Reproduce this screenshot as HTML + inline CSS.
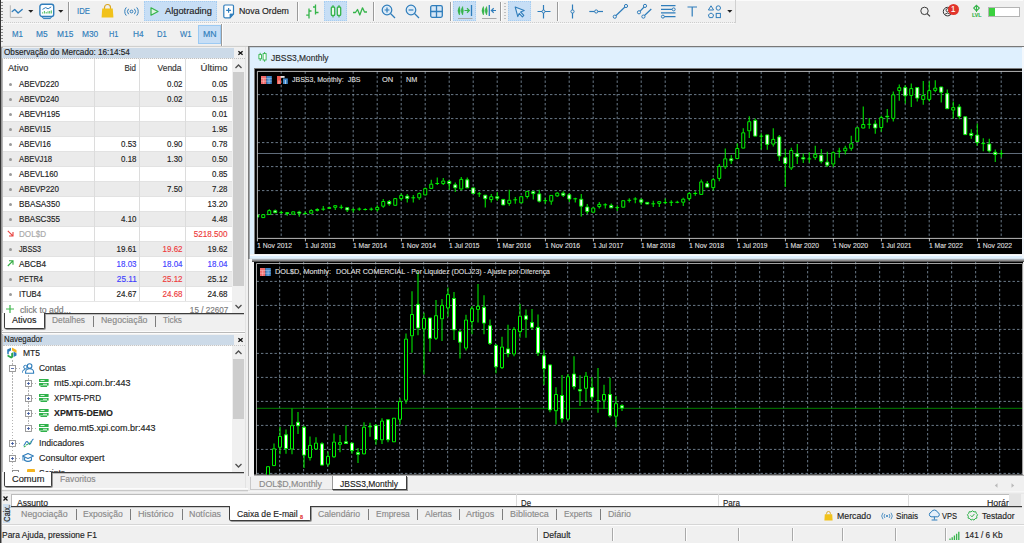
<!DOCTYPE html>
<html><head><meta charset="utf-8"><title>MetaTrader 5</title>
<style>
html,body{margin:0;padding:0}
body{width:1024px;height:543px;overflow:hidden;background:#f0f0f0;font-family:"Liberation Sans",sans-serif;position:relative}
#app{position:absolute;left:0;top:0;width:1024px;height:543px;overflow:hidden}
#app div,#app span.t,#app svg{position:absolute}
span.t{white-space:pre;display:block;-webkit-text-stroke:.15px}
svg{overflow:visible}
</style></head><body><div id="app">
<div style="left:0px;top:0px;width:1px;height:543px;background:#353535;"></div>
<div style="left:1px;top:47px;width:1px;height:496px;background:#9a9a9a;"></div>
<div style="left:2px;top:47px;width:1px;height:443px;background:#b8b8b8;"></div>
<div style="left:1px;top:0px;width:1022px;height:1px;background:#fbfbfb;"></div>
<div style="left:2px;top:22px;width:733px;height:1px;background:transparent;border-top:1px dotted #cdcdcd;height:0"></div>
<div style="left:2px;top:23px;width:733px;height:1px;background:#fbfbfb;opacity:.7"></div>
<div style="left:735px;top:0px;width:1px;height:23px;background:#d0d0d0;"></div>
<div style="left:1px;top:2px;width:2px;height:20px;background:transparent;background:repeating-linear-gradient(to bottom,#8e8e8e 0,#8e8e8e 1px,transparent 1px,transparent 3px)"></div>
<div style="left:1px;top:26px;width:2px;height:18px;background:transparent;background:repeating-linear-gradient(to bottom,#8e8e8e 0,#8e8e8e 1px,transparent 1px,transparent 3px)"></div>
<div style="left:504px;top:3px;width:2px;height:18px;background:transparent;background:repeating-linear-gradient(to bottom,#c0c0c0 0,#c0c0c0 1px,transparent 1px,transparent 3px)"></div>
<div style="left:1px;top:45px;width:247px;height:1px;background:#ececec;"></div>
<div style="left:1px;top:46px;width:247px;height:1px;background:#d0d0ce;"></div>
<div style="left:248px;top:46px;width:776px;height:1px;background:#787878;"></div>
<div style="left:248px;top:47px;width:776px;height:1px;background:#c6d4e0;"></div>
<div style="left:248px;top:46px;width:1px;height:430px;background:#7a7a7a;"></div>
<div style="left:249px;top:47px;width:1px;height:429px;background:#a0a4a8;"></div>
<svg style="left:9px;top:5px" width="14" height="13" viewBox="0 0 14 13" ><path d="M1.3 0.3V12.4H13.2" fill="none" stroke="#b4b4b4" stroke-width="1"/><path d="M3.2 6.6L5.7 4.5L9.1 8L13.2 4.4" fill="none" stroke="#2f7dbb" stroke-width="1.3" stroke-linejoin="round" stroke-linecap="round"/></svg>
<svg style="left:27.5px;top:10.4px" width="6" height="4" viewBox="0 0 6 4" ><path d="M0.2 0H5.4L2.8 2.8Z" fill="#222"/></svg>
<svg style="left:39px;top:3px" width="16" height="16" viewBox="0 0 16 16" ><path d="M3.2 13.6L4.4 15.6H11.4L12.6 13.6Z" fill="#cfe3f5" stroke="#2f7dbb" stroke-width="1"/><rect x="0.9" y="1.3" width="13.8" height="12.2" rx="2.2" fill="#fbfdff" stroke="#2f7dbb" stroke-width="1.4"/><path d="M3.5 6.4L6.6 4.6L9.1 5.8L12.2 3.9" fill="none" stroke="#2f7dbb" stroke-width="1" stroke-linejoin="round"/><path d="M3.6 10.5V9.3M5.4 10.5V8M7.2 10.5V9M9 10.5V8.3M10.7 10.5V8M12.3 10.5V7.4" stroke="#35b44a" stroke-width=".9"/></svg>
<svg style="left:58px;top:10.4px" width="6" height="4" viewBox="0 0 6 4" ><path d="M0.2 0H5.4L2.8 2.8Z" fill="#222"/></svg>
<div style="left:68px;top:2px;width:1px;height:19px;background:#9a9a9a;"></div>
<div style="left:69px;top:2px;width:1px;height:19px;background:#fdfdfd;"></div>
<span class="t" style="top:7.21px;font-size:9.2px;line-height:9.2px;color:#2f7dbb;left:77.00px;transform-origin:0 50%;transform:scaleX(0.8476);">IDE</span>
<svg style="left:101px;top:4px" width="13" height="14" viewBox="0 0 13 14" ><path d="M3.5 5V3.5A3 3 0 0 1 9.5 3.5V5" fill="none" stroke="#d9a520" stroke-width="1.2"/><path d="M1.2 4.6H11.8L12.4 13.5H0.6Z" fill="#f1c21b"/></svg>
<svg style="left:124px;top:7px" width="15" height="9" viewBox="0 0 15 9" ><circle cx="7.5" cy="4.5" r="1.4" fill="none" stroke="#2f7dbb" stroke-width="1"/><path d="M4.6 1.8A4 4 0 0 0 4.6 7.2M10.4 1.8A4 4 0 0 1 10.4 7.2M2.3 0.4A6.2 6.2 0 0 0 2.3 8.6M12.7 0.4A6.2 6.2 0 0 1 12.7 8.6" fill="none" stroke="#2f7dbb" stroke-width="1"/></svg>
<div style="left:144px;top:1px;width:73px;height:20px;background:#c7def5;border:1px dotted #a6cdf1;box-sizing:border-box"></div>
<svg style="left:150px;top:7px" width="9" height="9" viewBox="0 0 9 9" ><path d="M1 0.8L8 4.5L1 8.2Z" fill="#dff3e2" stroke="#35b44a" stroke-width="1.2" stroke-linejoin="round"/></svg>
<span class="t" style="top:7.21px;font-size:9.2px;line-height:9.2px;color:#222;left:164.50px;transform-origin:0 50%;transform:scaleX(1.0098);">Algotrading</span>
<svg style="left:223px;top:4px" width="11" height="15" viewBox="0 0 11 15" ><path d="M2 1H9.5A1 1 0 0 1 10.5 2V10L7 13.8H2A1.2 1.2 0 0 1 0.8 12.6V2.2A1.2 1.2 0 0 1 2 1Z" fill="#fff" stroke="#2f7dbb" stroke-width="1.2"/><path d="M10.5 10H7V13.8" fill="#2f7dbb" stroke="#2f7dbb" stroke-width=".8"/><path d="M3.2 6.3H8M5.6 3.9V8.7" stroke="#2f7dbb" stroke-width="1.2"/></svg>
<span class="t" style="top:7.21px;font-size:9.2px;line-height:9.2px;color:#222;left:239.00px;transform-origin:0 50%;transform:scaleX(0.9588);">Nova Ordem</span>
<div style="left:297px;top:2px;width:1px;height:19px;background:#9a9a9a;"></div>
<div style="left:298px;top:2px;width:1px;height:19px;background:#fdfdfd;"></div>
<svg style="left:305px;top:4px" width="14" height="15" viewBox="0 0 14 15" ><path d="M4 4.5V14.5M1.2 11.2H4M4 7H6.5M10.5 0.5V10.5M8 3H10.5M10.5 8.5H13.5" fill="none" stroke="#35b44a" stroke-width="1.3"/></svg>
<div style="left:324px;top:1px;width:23px;height:20px;background:#c7def5;border:1px dotted #a6cdf1;box-sizing:border-box"></div>
<svg style="left:330px;top:5px" width="12" height="13" viewBox="0 0 12 13" ><path d="M3 0V12.5M9 0V12.5" stroke="#35b44a" stroke-width="1"/><rect x="1.3" y="2" width="3.4" height="8.5" rx="1" fill="#e9f7eb" stroke="#35b44a" stroke-width="1.3"/><rect x="7.3" y="2" width="3.4" height="8.5" rx="1" fill="#e9f7eb" stroke="#35b44a" stroke-width="1.3"/></svg>
<svg style="left:353px;top:7px" width="15" height="9" viewBox="0 0 15 9" ><path d="M0 5.5H2.5L4.5 2.5L6.8 8L9.5 0.8L11.5 5L14 5" fill="none" stroke="#35b44a" stroke-width="1.3" stroke-linejoin="round"/></svg>
<div style="left:373px;top:2px;width:1px;height:19px;background:#9a9a9a;"></div>
<div style="left:374px;top:2px;width:1px;height:19px;background:#fdfdfd;"></div>
<svg style="left:381px;top:4px" width="15" height="15" viewBox="0 0 15 15" ><circle cx="6" cy="6" r="4.8" fill="#dcebf8" stroke="#2f7dbb" stroke-width="1.2"/><path d="M9.5 9.5L14 14" stroke="#2f7dbb" stroke-width="1.3"/><path d="M3.6 6H8.4M6 3.6V8.4" stroke="#2f7dbb" stroke-width="1.2"/></svg>
<svg style="left:405px;top:4px" width="15" height="15" viewBox="0 0 15 15" ><circle cx="6" cy="6" r="4.8" fill="#dcebf8" stroke="#2f7dbb" stroke-width="1.2"/><path d="M9.5 9.5L14 14" stroke="#2f7dbb" stroke-width="1.3"/><path d="M3.6 6H8.4" stroke="#2f7dbb" stroke-width="1.2"/></svg>
<svg style="left:430px;top:5px" width="13" height="13" viewBox="0 0 13 13" ><rect x=".7" y=".7" width="11.6" height="11.6" rx="1.5" fill="#d6e7f6" stroke="#2f7dbb" stroke-width="1.3"/><path d="M6.5 .7V12.3M.7 6.5H12.3" stroke="#2f7dbb" stroke-width="1.3"/></svg>
<div style="left:450px;top:2px;width:1px;height:19px;background:#9a9a9a;"></div>
<div style="left:451px;top:2px;width:1px;height:19px;background:#fdfdfd;"></div>
<div style="left:453px;top:1px;width:23px;height:20px;background:#c7def5;border:1px dotted #a6cdf1;box-sizing:border-box"></div>
<svg style="left:457px;top:4px" width="16" height="16" viewBox="0 0 16 16" ><path d="M2.4 2.6Q-0.4 6.8 2.4 11Q3.8 6.8 2.4 2.6ZM5.6 2.6Q2.8 6.8 5.6 11Q7 6.8 5.6 2.6Z" fill="#35b44a" stroke="#35b44a" stroke-width=".6"/><path d="M7.5 6.5H12M10 4.3L12.3 6.5L10 8.7" fill="none" stroke="#35b44a" stroke-width="1.2"/><path d="M14.5 1V12" stroke="#2f7dbb" stroke-width="1.3"/><path d="M1 14.5H15.5" stroke="#a8a8a8" stroke-width="1"/></svg>
<svg style="left:481px;top:4px" width="16" height="16" viewBox="0 0 16 16" ><path d="M2.4 2.6Q-0.4 6.8 2.4 11Q3.8 6.8 2.4 2.6ZM5.6 2.6Q2.8 6.8 5.6 11Q7 6.8 5.6 2.6Z" fill="#35b44a" stroke="#35b44a" stroke-width=".6"/><path d="M8.3 1V12" stroke="#2f7dbb" stroke-width="1.3"/><path d="M10.5 6.5H15M12.7 4.3L10.4 6.5L12.7 8.7" fill="none" stroke="#2f7dbb" stroke-width="1.2"/><path d="M1 14.5H15.5" stroke="#a8a8a8" stroke-width="1"/></svg>
<div style="left:500px;top:2px;width:1px;height:19px;background:#9a9a9a;"></div>
<div style="left:501px;top:2px;width:1px;height:19px;background:#fdfdfd;"></div>
<div style="left:508px;top:1px;width:23px;height:20px;background:#c7def5;border:1px dotted #a6cdf1;box-sizing:border-box"></div>
<svg style="left:514px;top:6px" width="12" height="12" viewBox="0 0 12 12" ><path d="M1.2 1L10.2 4.6L6.6 6L9.8 9.4L8.4 10.8L5.2 7.4L3.8 10.6Z" fill="#dcebf8" stroke="#2f7dbb" stroke-width="1.1" stroke-linejoin="round"/></svg>
<svg style="left:537px;top:5px" width="14" height="14" viewBox="0 0 14 14" ><path d="M0.5 6.5H13.5M6.5 0V13.5" stroke="#2f7dbb" stroke-width="1.2"/><circle cx="6.5" cy="6.5" r="1.5" fill="#f0f0f0" stroke="#2f7dbb" stroke-width="1"/></svg>
<div style="left:557px;top:2px;width:1px;height:19px;background:#9a9a9a;"></div>
<div style="left:558px;top:2px;width:1px;height:19px;background:#fdfdfd;"></div>
<svg style="left:568px;top:4px" width="9" height="15" viewBox="0 0 9 15" ><path d="M4.5 0.5V14.5" stroke="#2f7dbb" stroke-width="1.2"/><circle cx="4.5" cy="7.5" r="1.6" fill="#f0f0f0" stroke="#2f7dbb" stroke-width="1"/></svg>
<svg style="left:589px;top:7px" width="15" height="9" viewBox="0 0 15 9" ><path d="M0.3 4.5H14" stroke="#2f7dbb" stroke-width="1.2"/><circle cx="7.2" cy="4.5" r="1.6" fill="#f0f0f0" stroke="#2f7dbb" stroke-width="1"/></svg>
<svg style="left:612px;top:4px" width="16" height="15" viewBox="0 0 16 15" ><path d="M3.3 12.3L13.7 2.3" stroke="#2f7dbb" stroke-width="1.2"/><circle cx="2.8" cy="12.7" r="1.6" fill="#f0f0f0" stroke="#2f7dbb" stroke-width="1"/><circle cx="14" cy="2" r="1.6" fill="#f0f0f0" stroke="#2f7dbb" stroke-width="1"/></svg>
<svg style="left:636px;top:3px" width="17" height="16" viewBox="0 0 17 16" ><path d="M3 9.3L9 3M7.5 13.5L15.3 6" stroke="#2f7dbb" stroke-width="1.2"/><circle cx="9" cy="2.9" r="1.6" fill="#f0f0f0" stroke="#2f7dbb" stroke-width="1"/><circle cx="3" cy="9.3" r="1.6" fill="#f0f0f0" stroke="#2f7dbb" stroke-width="1"/><circle cx="7.4" cy="13.6" r="1.6" fill="#f0f0f0" stroke="#2f7dbb" stroke-width="1"/></svg>
<svg style="left:660px;top:4px" width="17" height="15" viewBox="0 0 17 15" ><path d="M1 1.6H15.5M1 5.4H12M1 8.9H15.5M4 12.6H15.5" stroke="#2f7dbb" stroke-width="1.2"/><circle cx="13.7" cy="5.4" r="1.5" fill="#f0f0f0" stroke="#2f7dbb" stroke-width="1"/><circle cx="2.9" cy="12.6" r="1.5" fill="#f0f0f0" stroke="#2f7dbb" stroke-width="1"/></svg>
<svg style="left:687px;top:6px" width="11" height="11" viewBox="0 0 11 11" ><path d="M0.5 1H10M5.2 1V10.5" stroke="#2f7dbb" stroke-width="1.2" fill="none"/></svg>
<svg style="left:708px;top:5px" width="14" height="14" viewBox="0 0 14 14" ><path d="M3 0.8L5.6 5H0.4Z" fill="none" stroke="#2f7dbb" stroke-width="1"/><circle cx="10.3" cy="3" r="2.2" fill="none" stroke="#2f7dbb" stroke-width="1"/><path d="M3 8L5.6 9.8L4.7 12.6H1.3L0.4 9.8Z" fill="none" stroke="#2f7dbb" stroke-width="1"/><rect x="8.2" y="8.4" width="4.2" height="4.2" fill="none" stroke="#2f7dbb" stroke-width="1"/></svg>
<svg style="left:726.5px;top:10.4px" width="6" height="4" viewBox="0 0 6 4" ><path d="M0.2 0H5.4L2.8 2.8Z" fill="#222"/></svg>
<svg style="left:919px;top:6px" width="13" height="12" viewBox="0 0 13 12" ><circle cx="5.5" cy="4.9" r="3.7" fill="none" stroke="#333" stroke-width=".95"/><path d="M8.2 7.7L11 10.4" stroke="#333" stroke-width="1.1"/></svg>
<svg style="left:943px;top:6px" width="17" height="12" viewBox="0 0 17 12" ><circle cx="4.6" cy="5.6" r="4.3" fill="none" stroke="#333" stroke-width="1"/><circle cx="4.6" cy="4.2" r="1.6" fill="none" stroke="#333" stroke-width=".9"/><path d="M1.6 8.4Q4.6 5.6 7.6 8.4" fill="none" stroke="#333" stroke-width=".9"/></svg>
<div style="left:948px;top:4px;width:11px;height:11px;background:#e2352b;border-radius:6px"></div>
<span class="t" style="top:5.38px;font-size:9px;line-height:9px;color:#fff;left:951.30px;transform-origin:0 50%;transform:scaleX(0.8790);">1</span>
<svg style="left:971px;top:5px" width="11" height="13" viewBox="0 0 11 13" ><path d="M5.5 0.3L8.3 3L5.5 6L2.7 3Z" fill="none" stroke="#35b44a" stroke-width="1.1"/><path d="M5.5 2V7" stroke="#35b44a" stroke-width="1"/></svg>
<span class="t" style="top:11.92px;font-size:6px;line-height:6px;color:#35b44a;font-weight:bold;left:972.00px;transform-origin:0 50%;transform:scaleX(0.8726);">LVL</span>
<div style="left:988px;top:7px;width:32px;height:10px;background:#ffffff;border:1px solid #b4b4b4;box-sizing:border-box"></div>
<div style="left:989px;top:8px;width:6px;height:8px;background:#3bd13f;"></div>
<div style="left:198px;top:25px;width:23px;height:19px;background:#c7def5;border:1px solid #9ccaf3;box-sizing:border-box"></div>
<span class="t" style="top:30.31px;font-size:9.2px;line-height:9.2px;color:#2f7dbb;left:12.00px;transform-origin:0 50%;transform:scaleX(0.8607);">M1</span>
<span class="t" style="top:30.31px;font-size:9.2px;line-height:9.2px;color:#2f7dbb;left:36.00px;transform-origin:0 50%;transform:scaleX(0.9154);">M5</span>
<span class="t" style="top:30.31px;font-size:9.2px;line-height:9.2px;color:#2f7dbb;left:57.30px;transform-origin:0 50%;transform:scaleX(0.9163);">M15</span>
<span class="t" style="top:30.31px;font-size:9.2px;line-height:9.2px;color:#2f7dbb;left:81.50px;transform-origin:0 50%;transform:scaleX(0.9107);">M30</span>
<span class="t" style="top:30.31px;font-size:9.2px;line-height:9.2px;color:#2f7dbb;left:108.80px;transform-origin:0 50%;transform:scaleX(0.7993);">H1</span>
<span class="t" style="top:30.31px;font-size:9.2px;line-height:9.2px;color:#2f7dbb;left:132.50px;transform-origin:0 50%;transform:scaleX(0.9013);">H4</span>
<span class="t" style="top:30.31px;font-size:9.2px;line-height:9.2px;color:#2f7dbb;left:156.80px;transform-origin:0 50%;transform:scaleX(0.8333);">D1</span>
<span class="t" style="top:30.31px;font-size:9.2px;line-height:9.2px;color:#2f7dbb;left:179.50px;transform-origin:0 50%;transform:scaleX(0.8406);">W1</span>
<span class="t" style="top:30.31px;font-size:9.2px;line-height:9.2px;color:#2f7dbb;left:203.00px;transform-origin:0 50%;transform:scaleX(0.9505);">MN</span>
<div style="left:221px;top:24px;width:1px;height:22px;background:#9a9a9a;"></div>
<div style="left:222px;top:24px;width:1px;height:22px;background:#fdfdfd;"></div>
<div style="left:2px;top:48px;width:232px;height:10px;background:#ccdae8;"></div>
<div style="left:2px;top:58px;width:243px;height:1px;background:transparent;border-top:1px dotted #c0c0c0;height:0"></div>
<span class="t" style="top:48.21px;font-size:9.2px;line-height:9.2px;color:#222;left:4.00px;transform-origin:0 50%;transform:scaleX(0.8894);">Observação do Mercado: 16:14:54</span>
<svg style="left:238px;top:51px" width="5" height="4" viewBox="0 0 5 4" ><path d="M0.4 0.2L4.6 3.8M4.6 0.2L0.4 3.8" stroke="#111" stroke-width="1.3"/></svg>
<div style="left:3px;top:59px;width:229px;height:255px;background:#ffffff;"></div>
<span class="t" style="top:63.58px;font-size:9px;line-height:9px;color:#333;left:7.60px;transform-origin:0 50%;transform:scaleX(1.0195);">Ativo</span>
<span class="t" style="top:63.58px;font-size:9px;line-height:9px;color:#333;right:888.00px;transform-origin:100% 50%;transform:scaleX(0.8840);">Bid</span>
<span class="t" style="top:63.58px;font-size:9px;line-height:9px;color:#333;right:842.50px;transform-origin:100% 50%;transform:scaleX(0.9401);">Venda</span>
<span class="t" style="top:63.58px;font-size:9px;line-height:9px;color:#333;right:796.50px;transform-origin:100% 50%;transform:scaleX(1.0587);">Último</span>
<span class="t" style="top:80.38px;font-size:9px;line-height:9px;color:#222;left:18.70px;transform-origin:0 50%;transform:scaleX(0.8786);">ABEVD220</span>
<span class="t" style="top:80.38px;font-size:9px;line-height:9px;color:#222;right:841.50px;transform-origin:100% 50%;transform:scaleX(0.8791);">0.02</span>
<span class="t" style="top:80.38px;font-size:9px;line-height:9px;color:#222;right:796.00px;transform-origin:100% 50%;transform:scaleX(0.8791);">0.05</span>
<div style="left:8.5px;top:83px;width:3px;height:3px;background:#9a9a9a;border-radius:2px"></div>
<div style="left:3px;top:91px;width:229px;height:15px;background:#ebebeb;"></div>
<div style="left:3px;top:91px;width:229px;height:1px;background:#e2e2e2;"></div>
<span class="t" style="top:95.38px;font-size:9px;line-height:9px;color:#222;left:18.70px;transform-origin:0 50%;transform:scaleX(0.8786);">ABEVD240</span>
<span class="t" style="top:95.38px;font-size:9px;line-height:9px;color:#222;right:841.50px;transform-origin:100% 50%;transform:scaleX(0.8791);">0.02</span>
<span class="t" style="top:95.38px;font-size:9px;line-height:9px;color:#222;right:796.00px;transform-origin:100% 50%;transform:scaleX(0.8791);">0.15</span>
<div style="left:8.5px;top:98px;width:3px;height:3px;background:#9a9a9a;border-radius:2px"></div>
<div style="left:3px;top:106px;width:229px;height:1px;background:#e2e2e2;"></div>
<span class="t" style="top:110.38px;font-size:9px;line-height:9px;color:#222;left:18.70px;transform-origin:0 50%;transform:scaleX(0.9005);">ABEVH195</span>
<span class="t" style="top:110.38px;font-size:9px;line-height:9px;color:#222;right:796.00px;transform-origin:100% 50%;transform:scaleX(0.8791);">0.01</span>
<div style="left:8.5px;top:113px;width:3px;height:3px;background:#9a9a9a;border-radius:2px"></div>
<div style="left:3px;top:121px;width:229px;height:15px;background:#ebebeb;"></div>
<div style="left:3px;top:121px;width:229px;height:1px;background:#e2e2e2;"></div>
<span class="t" style="top:125.38px;font-size:9px;line-height:9px;color:#222;left:18.70px;transform-origin:0 50%;transform:scaleX(0.8761);">ABEVI15</span>
<span class="t" style="top:125.38px;font-size:9px;line-height:9px;color:#222;right:796.00px;transform-origin:100% 50%;transform:scaleX(0.8791);">1.95</span>
<div style="left:8.5px;top:128px;width:3px;height:3px;background:#9a9a9a;border-radius:2px"></div>
<div style="left:3px;top:136px;width:229px;height:1px;background:#e2e2e2;"></div>
<span class="t" style="top:140.38px;font-size:9px;line-height:9px;color:#222;left:18.70px;transform-origin:0 50%;transform:scaleX(0.8761);">ABEVI16</span>
<span class="t" style="top:140.38px;font-size:9px;line-height:9px;color:#222;right:887.50px;transform-origin:100% 50%;transform:scaleX(0.8791);">0.53</span>
<span class="t" style="top:140.38px;font-size:9px;line-height:9px;color:#222;right:841.50px;transform-origin:100% 50%;transform:scaleX(0.8791);">0.90</span>
<span class="t" style="top:140.38px;font-size:9px;line-height:9px;color:#222;right:796.00px;transform-origin:100% 50%;transform:scaleX(0.8791);">0.78</span>
<div style="left:8.5px;top:143px;width:3px;height:3px;background:#9a9a9a;border-radius:2px"></div>
<div style="left:3px;top:151px;width:229px;height:15px;background:#ebebeb;"></div>
<div style="left:3px;top:151px;width:229px;height:1px;background:#e2e2e2;"></div>
<span class="t" style="top:155.38px;font-size:9px;line-height:9px;color:#222;left:18.70px;transform-origin:0 50%;transform:scaleX(0.8566);">ABEVJ18</span>
<span class="t" style="top:155.38px;font-size:9px;line-height:9px;color:#222;right:887.50px;transform-origin:100% 50%;transform:scaleX(0.8791);">0.18</span>
<span class="t" style="top:155.38px;font-size:9px;line-height:9px;color:#222;right:841.50px;transform-origin:100% 50%;transform:scaleX(0.8791);">1.30</span>
<span class="t" style="top:155.38px;font-size:9px;line-height:9px;color:#222;right:796.00px;transform-origin:100% 50%;transform:scaleX(0.8791);">0.50</span>
<div style="left:8.5px;top:158px;width:3px;height:3px;background:#9a9a9a;border-radius:2px"></div>
<div style="left:3px;top:166px;width:229px;height:1px;background:#e2e2e2;"></div>
<span class="t" style="top:170.38px;font-size:9px;line-height:9px;color:#222;left:18.70px;transform-origin:0 50%;transform:scaleX(0.8857);">ABEVL160</span>
<span class="t" style="top:170.38px;font-size:9px;line-height:9px;color:#222;right:796.00px;transform-origin:100% 50%;transform:scaleX(0.8791);">0.85</span>
<div style="left:8.5px;top:173px;width:3px;height:3px;background:#9a9a9a;border-radius:2px"></div>
<div style="left:3px;top:181px;width:229px;height:15px;background:#ebebeb;"></div>
<div style="left:3px;top:181px;width:229px;height:1px;background:#e2e2e2;"></div>
<span class="t" style="top:185.38px;font-size:9px;line-height:9px;color:#222;left:18.70px;transform-origin:0 50%;transform:scaleX(0.8882);">ABEVP220</span>
<span class="t" style="top:185.38px;font-size:9px;line-height:9px;color:#222;right:841.50px;transform-origin:100% 50%;transform:scaleX(0.8791);">7.50</span>
<span class="t" style="top:185.38px;font-size:9px;line-height:9px;color:#222;right:796.00px;transform-origin:100% 50%;transform:scaleX(0.8791);">7.28</span>
<div style="left:8.5px;top:188px;width:3px;height:3px;background:#9a9a9a;border-radius:2px"></div>
<div style="left:3px;top:196px;width:229px;height:1px;background:#e2e2e2;"></div>
<span class="t" style="top:200.38px;font-size:9px;line-height:9px;color:#222;left:18.70px;transform-origin:0 50%;transform:scaleX(0.9104);">BBASA350</span>
<span class="t" style="top:200.38px;font-size:9px;line-height:9px;color:#222;right:796.00px;transform-origin:100% 50%;transform:scaleX(0.8880);">13.20</span>
<div style="left:8.5px;top:203px;width:3px;height:3px;background:#9a9a9a;border-radius:2px"></div>
<div style="left:3px;top:211px;width:229px;height:15px;background:#ebebeb;"></div>
<div style="left:3px;top:211px;width:229px;height:1px;background:#e2e2e2;"></div>
<span class="t" style="top:215.38px;font-size:9px;line-height:9px;color:#222;left:18.70px;transform-origin:0 50%;transform:scaleX(0.9005);">BBASC355</span>
<span class="t" style="top:215.38px;font-size:9px;line-height:9px;color:#222;right:887.50px;transform-origin:100% 50%;transform:scaleX(0.8791);">4.10</span>
<span class="t" style="top:215.38px;font-size:9px;line-height:9px;color:#222;right:796.00px;transform-origin:100% 50%;transform:scaleX(0.8791);">4.48</span>
<div style="left:8.5px;top:218px;width:3px;height:3px;background:#9a9a9a;border-radius:2px"></div>
<div style="left:3px;top:226px;width:229px;height:1px;background:#e2e2e2;"></div>
<span class="t" style="top:230.38px;font-size:9px;line-height:9px;color:#a9a9a9;left:18.70px;transform-origin:0 50%;transform:scaleX(0.8997);">DOL$D</span>
<span class="t" style="top:230.38px;font-size:9px;line-height:9px;color:#ee3b3b;right:796.00px;transform-origin:100% 50%;transform:scaleX(0.9004);">5218.500</span>
<svg style="left:7px;top:230px" width="7" height="7" viewBox="0 0 7 7" ><path d="M0.8 0.8L5.6 5.6M2 6H6V2" fill="none" stroke="#e8423f" stroke-width="1.1"/></svg>
<div style="left:3px;top:241px;width:229px;height:15px;background:#ebebeb;"></div>
<div style="left:3px;top:241px;width:229px;height:1px;background:#e2e2e2;"></div>
<span class="t" style="top:245.38px;font-size:9px;line-height:9px;color:#222;left:18.70px;transform-origin:0 50%;transform:scaleX(0.7996);">JBSS3</span>
<span class="t" style="top:245.38px;font-size:9px;line-height:9px;color:#222;right:887.50px;transform-origin:100% 50%;transform:scaleX(0.8880);">19.61</span>
<span class="t" style="top:245.38px;font-size:9px;line-height:9px;color:#ee3b3b;right:841.50px;transform-origin:100% 50%;transform:scaleX(0.8880);">19.62</span>
<span class="t" style="top:245.38px;font-size:9px;line-height:9px;color:#222;right:796.00px;transform-origin:100% 50%;transform:scaleX(0.8880);">19.62</span>
<div style="left:8.5px;top:248px;width:3px;height:3px;background:#9a9a9a;border-radius:2px"></div>
<div style="left:3px;top:256px;width:229px;height:1px;background:#e2e2e2;"></div>
<span class="t" style="top:260.38px;font-size:9px;line-height:9px;color:#222;left:18.70px;transform-origin:0 50%;transform:scaleX(0.9148);">ABCB4</span>
<span class="t" style="top:260.38px;font-size:9px;line-height:9px;color:#3f3fff;right:887.50px;transform-origin:100% 50%;transform:scaleX(0.8880);">18.03</span>
<span class="t" style="top:260.38px;font-size:9px;line-height:9px;color:#3f3fff;right:841.50px;transform-origin:100% 50%;transform:scaleX(0.8880);">18.04</span>
<span class="t" style="top:260.38px;font-size:9px;line-height:9px;color:#3f3fff;right:796.00px;transform-origin:100% 50%;transform:scaleX(0.8880);">18.04</span>
<svg style="left:7px;top:260px" width="7" height="7" viewBox="0 0 7 7" ><path d="M0.8 6L5.6 1.2M2 0.8H6V4.8" fill="none" stroke="#2faa3f" stroke-width="1.1"/></svg>
<div style="left:3px;top:271px;width:229px;height:15px;background:#ebebeb;"></div>
<div style="left:3px;top:271px;width:229px;height:1px;background:#e2e2e2;"></div>
<span class="t" style="top:275.38px;font-size:9px;line-height:9px;color:#222;left:18.70px;transform-origin:0 50%;transform:scaleX(0.8273);">PETR4</span>
<span class="t" style="top:275.38px;font-size:9px;line-height:9px;color:#3f3fff;right:887.50px;transform-origin:100% 50%;transform:scaleX(0.9151);">25.11</span>
<span class="t" style="top:275.38px;font-size:9px;line-height:9px;color:#ee3b3b;right:841.50px;transform-origin:100% 50%;transform:scaleX(0.8880);">25.12</span>
<span class="t" style="top:275.38px;font-size:9px;line-height:9px;color:#222;right:796.00px;transform-origin:100% 50%;transform:scaleX(0.8880);">25.12</span>
<div style="left:8.5px;top:278px;width:3px;height:3px;background:#9a9a9a;border-radius:2px"></div>
<div style="left:3px;top:286px;width:229px;height:1px;background:#e2e2e2;"></div>
<span class="t" style="top:290.38px;font-size:9px;line-height:9px;color:#222;left:18.70px;transform-origin:0 50%;transform:scaleX(0.8625);">ITUB4</span>
<span class="t" style="top:290.38px;font-size:9px;line-height:9px;color:#222;right:887.50px;transform-origin:100% 50%;transform:scaleX(0.8880);">24.67</span>
<span class="t" style="top:290.38px;font-size:9px;line-height:9px;color:#ee3b3b;right:841.50px;transform-origin:100% 50%;transform:scaleX(0.8880);">24.68</span>
<span class="t" style="top:290.38px;font-size:9px;line-height:9px;color:#222;right:796.00px;transform-origin:100% 50%;transform:scaleX(0.8880);">24.68</span>
<div style="left:8.5px;top:293px;width:3px;height:3px;background:#9a9a9a;border-radius:2px"></div>
<div style="left:94px;top:59px;width:1px;height:242px;background:#dcdcdc;"></div>
<div style="left:139px;top:59px;width:1px;height:242px;background:#dcdcdc;"></div>
<div style="left:185px;top:59px;width:1px;height:242px;background:#dcdcdc;"></div>
<div style="left:2px;top:76px;width:230px;height:1px;background:#f0f0f0;opacity:0"></div>
<div style="left:3px;top:301px;width:229px;height:1px;background:#e6e6e6;"></div>
<svg style="left:6px;top:305px" width="8" height="8" viewBox="0 0 8 8" ><path d="M4 0V8M0 4H8" stroke="#3cb54a" stroke-width="1.2"/></svg>
<span class="t" style="top:304.87px;font-size:9.6px;line-height:9.6px;color:#7a7a7a;left:19.50px;transform-origin:0 50%;transform:scaleX(0.9103);">click to add...</span>
<span class="t" style="top:304.87px;font-size:9.6px;line-height:9.6px;color:#7a7a7a;right:796.00px;transform-origin:100% 50%;transform:scaleX(0.8485);">15 / 22607</span>
<div style="left:232px;top:59px;width:13px;height:254px;background:#f0f0f0;"></div>
<div style="left:233px;top:72px;width:11px;height:214px;background:#cdcdcd;"></div>
<svg style="left:234.5px;top:64px" width="7" height="5" viewBox="0 0 7 5" ><path d="M0.5 4L3.5 1L6.5 4" fill="none" stroke="#505050" stroke-width="1.3"/></svg>
<svg style="left:234.5px;top:304px" width="7" height="5" viewBox="0 0 7 5" ><path d="M0.5 1L3.5 4L6.5 1" fill="none" stroke="#505050" stroke-width="1.3"/></svg>
<div style="left:2px;top:313px;width:243px;height:17px;background:#f0f0f0;"></div>
<div style="left:44px;top:313px;width:200px;height:1px;background:#3c3c3c;"></div>
<div style="left:44px;top:314px;width:200px;height:1px;background:#8d8d8d;opacity:.5"></div>
<div style="left:4px;top:313px;width:41px;height:16px;background:#ffffff;border:1px solid #3c3c3c;border-top:none;box-sizing:border-box;border-radius:0 0 2px 2px;box-shadow:1px 1px 0 #9a9a9a"></div>
<span class="t" style="top:316.21px;font-size:9.2px;line-height:9.2px;color:#222;left:12.00px;transform-origin:0 50%;transform:scaleX(0.9779);">Ativos</span>
<span class="t" style="top:316.21px;font-size:9.2px;line-height:9.2px;color:#8a8a8a;left:52.00px;transform-origin:0 50%;transform:scaleX(0.9088);">Detalhes</span>
<div style="left:93px;top:316px;width:1px;height:11px;background:#7d7d7d;"></div>
<span class="t" style="top:316.21px;font-size:9.2px;line-height:9.2px;color:#8a8a8a;left:100.50px;transform-origin:0 50%;transform:scaleX(0.9570);">Negociação</span>
<div style="left:155px;top:316px;width:1px;height:11px;background:#7d7d7d;"></div>
<span class="t" style="top:316.21px;font-size:9.2px;line-height:9.2px;color:#8a8a8a;left:163.00px;transform-origin:0 50%;transform:scaleX(0.8995);">Ticks</span>
<div style="left:2px;top:331px;width:243px;height:1px;background:#fbfbfb;"></div>
<div style="left:2px;top:332px;width:243px;height:1px;background:#b9b9b9;"></div>
<div style="left:245px;top:47px;width:1px;height:441px;background:#e3e3e3;"></div>
<div style="left:2px;top:333px;width:243px;height:1px;background:#fbfbfb;"></div>
<div style="left:3px;top:335px;width:231px;height:10px;background:#ccdae8;"></div>
<div style="left:3px;top:345px;width:242px;height:1px;background:transparent;border-top:1px dotted #c6c6c6;height:0"></div>
<span class="t" style="top:334.46px;font-size:9.5px;line-height:9.5px;color:#222;left:4.00px;transform-origin:0 50%;transform:scaleX(0.8284);">Navegador</span>
<svg style="left:238px;top:338px" width="5" height="4" viewBox="0 0 5 4" ><path d="M0.4 0.2L4.6 3.8M4.6 0.2L0.4 3.8" stroke="#111" stroke-width="1.3"/></svg>
<div style="left:3px;top:346px;width:229px;height:126px;background:#ffffff;"></div>
<div style="left:12px;top:360px;width:1px;height:112px;background:transparent;background:repeating-linear-gradient(to bottom,#b4b4b4 0,#b4b4b4 1.5px,transparent 1.5px,transparent 3px)"></div>
<div style="left:28px;top:375px;width:1px;height:53px;background:transparent;background:repeating-linear-gradient(to bottom,#b4b4b4 0,#b4b4b4 1.5px,transparent 1.5px,transparent 3px)"></div>
<svg style="left:6px;top:347px" width="12" height="12" viewBox="0 0 12 12" ><path d="M6 0.5L10.5 3V6L6 3.6Z" fill="#f3b521"/><path d="M1.2 2.5L5 0.8V3.6L2.8 4.8V7.6L1.2 6.8Z" fill="#2f7dbb"/><path d="M1.5 7.5L5.2 9.4V6.2L7.2 5.2V10.2L5.2 11.4L1.5 9.4Z" fill="#2aa84a"/><path d="M7.6 4.6L10.5 6.2V8.5L7.6 10Z" fill="#2f7dbb"/></svg>
<span class="t" style="top:347.96px;font-size:9.5px;line-height:9.5px;color:#222;left:22.50px;transform-origin:0 50%;transform:scaleX(0.8947);">MT5</span>
<div style="left:16px;top:368px;width:6px;height:1px;background:transparent;background:repeating-linear-gradient(to right,#b4b4b4 0,#b4b4b4 1.5px,transparent 1.5px,transparent 3px)"></div>
<svg style="left:8.8px;top:364.8px" width="7" height="7" viewBox="0 0 7 7" ><rect x=".5" y=".5" width="6" height="6" fill="#fff" stroke="#919191" stroke-width=".9"/><path d="M2 3.5H5" stroke="#35509a" stroke-width=".8" fill="none"/></svg>
<svg style="left:22px;top:363px" width="12" height="11" viewBox="0 0 12 11" ><circle cx="7.6" cy="3" r="2.3" fill="none" stroke="#2f7dbb" stroke-width="1.1"/><path d="M3.6 10.2V9A4 3.4 0 0 1 11.6 9V10.2Z" fill="none" stroke="#2f7dbb" stroke-width="1.1"/><circle cx="3.4" cy="4" r="1.7" fill="none" stroke="#2f7dbb" stroke-width="1"/><path d="M0.5 9.6V8.6A3 2.6 0 0 1 3.4 6.4" fill="none" stroke="#2f7dbb" stroke-width="1"/></svg>
<span class="t" style="top:363.26px;font-size:9.5px;line-height:9.5px;color:#222;left:38.80px;transform-origin:0 50%;transform:scaleX(0.8837);">Contas</span>
<div style="left:32px;top:383px;width:6px;height:1px;background:transparent;background:repeating-linear-gradient(to right,#b4b4b4 0,#b4b4b4 1.5px,transparent 1.5px,transparent 3px)"></div>
<svg style="left:24.8px;top:379.8px" width="7" height="7" viewBox="0 0 7 7" ><rect x=".5" y=".5" width="6" height="6" fill="#fff" stroke="#919191" stroke-width=".9"/><path d="M2 3.5H5M3.5 2V5" stroke="#35509a" stroke-width=".8" fill="none"/></svg>
<svg style="left:39px;top:379px" width="10" height="8" viewBox="0 0 10 8" ><rect x="0" y="0" width="9.6" height="3" fill="#2fb24a"/><rect x="0" y="4" width="9.6" height="2.6" fill="#2fb24a"/><rect x="1.5" y="1" width="4" height="1" fill="#d8f5dc"/><rect x="4" y="4.8" width="4" height="1" fill="#d8f5dc"/><rect x="1.5" y="7" width="6.6" height="1" fill="#2fb24a"/></svg>
<span class="t" style="top:378.26px;font-size:9.5px;line-height:9.5px;color:#222;left:54.00px;transform-origin:0 50%;transform:scaleX(0.9470);">mt5.xpi.com.br:443</span>
<div style="left:32px;top:398px;width:6px;height:1px;background:transparent;background:repeating-linear-gradient(to right,#b4b4b4 0,#b4b4b4 1.5px,transparent 1.5px,transparent 3px)"></div>
<svg style="left:24.8px;top:394.8px" width="7" height="7" viewBox="0 0 7 7" ><rect x=".5" y=".5" width="6" height="6" fill="#fff" stroke="#919191" stroke-width=".9"/><path d="M2 3.5H5M3.5 2V5" stroke="#35509a" stroke-width=".8" fill="none"/></svg>
<svg style="left:39px;top:394px" width="10" height="8" viewBox="0 0 10 8" ><rect x="0" y="0" width="9.6" height="3" fill="#2fb24a"/><rect x="0" y="4" width="9.6" height="2.6" fill="#2fb24a"/><rect x="1.5" y="1" width="4" height="1" fill="#d8f5dc"/><rect x="4" y="4.8" width="4" height="1" fill="#d8f5dc"/><rect x="1.5" y="7" width="6.6" height="1" fill="#2fb24a"/></svg>
<span class="t" style="top:393.26px;font-size:9.5px;line-height:9.5px;color:#222;left:54.00px;transform-origin:0 50%;transform:scaleX(0.8562);">XPMT5-PRD</span>
<div style="left:32px;top:413px;width:6px;height:1px;background:transparent;background:repeating-linear-gradient(to right,#b4b4b4 0,#b4b4b4 1.5px,transparent 1.5px,transparent 3px)"></div>
<svg style="left:24.8px;top:409.8px" width="7" height="7" viewBox="0 0 7 7" ><rect x=".5" y=".5" width="6" height="6" fill="#fff" stroke="#919191" stroke-width=".9"/><path d="M2 3.5H5M3.5 2V5" stroke="#35509a" stroke-width=".8" fill="none"/></svg>
<svg style="left:39px;top:409px" width="10" height="8" viewBox="0 0 10 8" ><rect x="0" y="0" width="9.6" height="3" fill="#2fb24a"/><rect x="0" y="4" width="9.6" height="2.6" fill="#2fb24a"/><rect x="1.5" y="1" width="4" height="1" fill="#d8f5dc"/><rect x="4" y="4.8" width="4" height="1" fill="#d8f5dc"/><rect x="1.5" y="7" width="6.6" height="1" fill="#2fb24a"/></svg>
<span class="t" style="top:408.26px;font-size:9.5px;line-height:9.5px;color:#222;font-weight:bold;left:54.00px;transform-origin:0 50%;transform:scaleX(0.9315);">XPMT5-DEMO</span>
<div style="left:32px;top:428px;width:6px;height:1px;background:transparent;background:repeating-linear-gradient(to right,#b4b4b4 0,#b4b4b4 1.5px,transparent 1.5px,transparent 3px)"></div>
<svg style="left:24.8px;top:424.8px" width="7" height="7" viewBox="0 0 7 7" ><rect x=".5" y=".5" width="6" height="6" fill="#fff" stroke="#919191" stroke-width=".9"/><path d="M2 3.5H5M3.5 2V5" stroke="#35509a" stroke-width=".8" fill="none"/></svg>
<svg style="left:39px;top:424px" width="10" height="8" viewBox="0 0 10 8" ><rect x="0" y="0" width="9.6" height="3" fill="#2fb24a"/><rect x="0" y="4" width="9.6" height="2.6" fill="#2fb24a"/><rect x="1.5" y="1" width="4" height="1" fill="#d8f5dc"/><rect x="4" y="4.8" width="4" height="1" fill="#d8f5dc"/><rect x="1.5" y="7" width="6.6" height="1" fill="#2fb24a"/></svg>
<span class="t" style="top:423.26px;font-size:9.5px;line-height:9.5px;color:#222;left:54.00px;transform-origin:0 50%;transform:scaleX(0.9469);">demo.mt5.xpi.com.br:443</span>
<div style="left:16px;top:443px;width:6px;height:1px;background:transparent;background:repeating-linear-gradient(to right,#b4b4b4 0,#b4b4b4 1.5px,transparent 1.5px,transparent 3px)"></div>
<svg style="left:8.8px;top:439.8px" width="7" height="7" viewBox="0 0 7 7" ><rect x=".5" y=".5" width="6" height="6" fill="#fff" stroke="#919191" stroke-width=".9"/><path d="M2 3.5H5M3.5 2V5" stroke="#35509a" stroke-width=".8" fill="none"/></svg>
<svg style="left:23px;top:438px" width="11" height="10" viewBox="0 0 11 10" ><path d="M0.5 7.5C2 7.5 2.5 3 4 3.5S5.5 7 7 6S8.5 1.5 10.5 1" fill="none" stroke="#2f7dbb" stroke-width="1.1"/><path d="M0.8 9C3 8.5 3.5 6 5 6.2S7 5 8 3.2" fill="none" stroke="#2fb24a" stroke-width="1.1" stroke-dasharray="2 1"/></svg>
<span class="t" style="top:438.26px;font-size:9.5px;line-height:9.5px;color:#222;left:38.50px;transform-origin:0 50%;transform:scaleX(0.9162);">Indicadores</span>
<div style="left:16px;top:458px;width:6px;height:1px;background:transparent;background:repeating-linear-gradient(to right,#b4b4b4 0,#b4b4b4 1.5px,transparent 1.5px,transparent 3px)"></div>
<svg style="left:8.8px;top:454.8px" width="7" height="7" viewBox="0 0 7 7" ><rect x=".5" y=".5" width="6" height="6" fill="#fff" stroke="#919191" stroke-width=".9"/><path d="M2 3.5H5M3.5 2V5" stroke="#35509a" stroke-width=".8" fill="none"/></svg>
<svg style="left:22px;top:453px" width="12" height="10" viewBox="0 0 12 10" ><path d="M6 0.6L11.4 3L6 5.4L0.6 3Z" fill="none" stroke="#2f7dbb" stroke-width="1.1" stroke-linejoin="round"/><path d="M2.6 4.2V7.2Q6 9.6 9.4 7.2V4.2" fill="none" stroke="#2f7dbb" stroke-width="1.1"/><path d="M1 3.4V7.6" stroke="#2f7dbb" stroke-width="1"/></svg>
<span class="t" style="top:453.26px;font-size:9.5px;line-height:9.5px;color:#222;left:38.50px;transform-origin:0 50%;transform:scaleX(0.9397);">Consultor expert</span>
<div style="left:3px;top:466px;width:229px;height:6px;overflow:hidden">
<div style="left:16px;top:7px;width:6px;height:1px;background:transparent;background:repeating-linear-gradient(to right,#b4b4b4 0,#b4b4b4 1.5px,transparent 1.5px,transparent 3px)"></div>
<div style="left:9px;top:4px;width:7px;height:7px;background:#ffffff;border:1px solid #8e8e8e;box-sizing:border-box"></div>
<div style="left:24px;top:3px;width:8px;height:6px;background:#f3b521;border-radius:1px"></div>
<span class="t" style="top:2.26px;font-size:9.5px;line-height:9.5px;color:#222;left:35.50px;transform-origin:0 50%;transform:scaleX(0.8955);">Scripts</span>
</div>
<div style="left:232px;top:346px;width:13px;height:126px;background:#f0f0f0;"></div>
<div style="left:233px;top:359px;width:11px;height:60px;background:#cdcdcd;"></div>
<svg style="left:234.5px;top:350px" width="7" height="5" viewBox="0 0 7 5" ><path d="M0.5 4L3.5 1L6.5 4" fill="none" stroke="#505050" stroke-width="1.3"/></svg>
<svg style="left:234.5px;top:463px" width="7" height="5" viewBox="0 0 7 5" ><path d="M0.5 1L3.5 4L6.5 1" fill="none" stroke="#505050" stroke-width="1.3"/></svg>
<div style="left:2px;top:472px;width:243px;height:16px;background:#f0f0f0;"></div>
<div style="left:52px;top:472px;width:192px;height:1px;background:#3c3c3c;"></div>
<div style="left:52px;top:473px;width:192px;height:1px;background:#8d8d8d;opacity:.5"></div>
<div style="left:4px;top:472px;width:48px;height:15px;background:#ffffff;border:1px solid #3c3c3c;border-top:none;box-sizing:border-box;border-radius:0 0 2px 2px;box-shadow:1px 1px 0 #9a9a9a"></div>
<span class="t" style="top:474.06px;font-size:9.5px;line-height:9.5px;color:#222;left:12.00px;transform-origin:0 50%;transform:scaleX(0.9773);">Comum</span>
<span class="t" style="top:474.06px;font-size:9.5px;line-height:9.5px;color:#8a8a8a;left:60.00px;transform-origin:0 50%;transform:scaleX(0.9087);">Favoritos</span>
<div style="left:2px;top:488px;width:246px;height:1px;background:#fcfcfc;"></div>
<div style="left:2px;top:489px;width:246px;height:1px;background:#f4f4f4;"></div>
<div style="left:2px;top:490px;width:246px;height:1px;background:#c8c8c8;"></div>
<div style="left:2px;top:491px;width:246px;height:1px;background:#e6e6e6;"></div>
<div style="left:248px;top:490px;width:776px;height:1px;background:#e8e8e8;"></div>
<div style="left:248px;top:491px;width:776px;height:1px;background:#f6f6f6;"></div>
<div style="left:2px;top:493px;width:1022px;height:1px;background:#e8e8e8;"></div>
<div style="left:250px;top:48px;width:772px;height:206px;background:#dff0fe;"></div>
<div style="left:1022px;top:47px;width:2px;height:212px;background:#f4f8fc;"></div>
<div style="left:250px;top:254px;width:772px;height:1px;background:#f2f2f2;"></div>
<div style="left:250px;top:255px;width:772px;height:1px;background:#f8fbfe;"></div>
<div style="left:250px;top:256px;width:772px;height:2px;background:#dff0fe;"></div>
<div style="left:250px;top:258px;width:774px;height:1px;background:#d8e4ee;"></div>
<svg style="left:258px;top:52px" width="9" height="10" viewBox="0 0 9 10" ><path d="M2.2 0.8V9M6.6 0V9.8" stroke="#2fb44a" stroke-width=".9"/><rect x="0.9" y="2.6" width="2.6" height="4.2" fill="#fff" stroke="#2fb44a" stroke-width=".9"/><rect x="5.1" y="1.6" width="3" height="6.4" fill="#fff" stroke="#2fb44a" stroke-width=".9"/></svg>
<span class="t" style="top:52.96px;font-size:9.5px;line-height:9.5px;color:#2a2a2a;left:271.00px;transform-origin:0 50%;transform:scaleX(0.8853);">JBSS3,Monthly</span>
<div style="left:249px;top:259px;width:5px;height:217px;background:#f6f6f6;"></div>
<div style="left:248px;top:259px;width:1px;height:217px;background:#a8a8a8;"></div>
<div style="left:250px;top:259px;width:774px;height:1px;background:#a4acb4;"></div>
<div style="left:250px;top:260px;width:774px;height:1px;background:#8c8a8a;"></div>
<div style="left:252px;top:261px;width:772px;height:1px;background:#505050;"></div>
<div style="left:250px;top:259px;width:2px;height:3px;background:#f6f6f6;"></div>
<svg style="left:0;top:0" width="1024" height="543" viewBox="0 0 1024 543"><rect x="254" y="68" width="768" height="1.2" fill="#7d7d7d"/><rect x="254" y="68" width="1.2" height="186" fill="#7d7d7d"/><clipPath id="ct"><rect x="257.4" y="69" width="765" height="185"/></clipPath><rect x="255" y="69" width="767" height="185" fill="#000"/><g clip-path="url(#ct)"><rect x="255" y="69" width="767" height="185" fill="#000"/><path d="M281.20 71.5V238.4M305.20 71.5V238.4M329.20 71.5V238.4M353.20 71.5V238.4M377.20 71.5V238.4M401.20 71.5V238.4M425.20 71.5V238.4M449.20 71.5V238.4M473.20 71.5V238.4M497.20 71.5V238.4M521.20 71.5V238.4M545.20 71.5V238.4M569.20 71.5V238.4M593.20 71.5V238.4M617.20 71.5V238.4M641.20 71.5V238.4M665.20 71.5V238.4M689.20 71.5V238.4M713.20 71.5V238.4M737.20 71.5V238.4M761.20 71.5V238.4M785.20 71.5V238.4M809.20 71.5V238.4M833.20 71.5V238.4M857.20 71.5V238.4M881.20 71.5V238.4M905.20 71.5V238.4M929.20 71.5V238.4M953.20 71.5V238.4M977.20 71.5V238.4M1001.20 71.5V238.4" stroke="#778899" stroke-width=".9" stroke-dasharray="2.4 2.1" fill="none"/><path d="M257.5 94.60H1022M257.5 118.60H1022M257.5 142.60H1022M257.5 166.60H1022M257.5 190.60H1022M257.5 214.60H1022" stroke="#778899" stroke-width=".9" stroke-dasharray="2.4 2.1" fill="none"/><path d="M257.5 153.5H1022" stroke="#778899" stroke-width=".8"/><path d="M269.25 209.2V210.2M275.25 209.4V210.4M281.25 210.7V214.1M287.25 213.9V215.8M299.25 210.7V211.6M299.25 213.6V216.8M305.25 211.6V214.6M311.25 209.2V210.2M317.25 208.2V209.2M317.25 210.7V211.6M323.25 206.1V210.7M335.25 207.7V210.0M341.25 204.8V209.2M347.25 210.4V212.0M353.25 208.2V212.6M359.25 207.6V210.7M365.25 208.2V210.4M371.25 207.6V210.7M377.25 205.3V207.0M377.25 210.1V211.6M383.25 199.0V201.1M383.25 206.6V207.8M389.25 200.0V201.1M389.25 204.4V205.7M401.25 193.6V195.0M401.25 199.0V200.7M407.25 194.0V195.7M407.25 198.8V202.6M413.25 195.0V202.6M419.25 192.5V193.2M419.25 198.2V199.8M425.25 187.5V188.2M431.25 179.8V183.8M437.25 177.5V185.0M443.25 178.1V180.6M443.25 184.0V185.0M449.25 180.0V181.0M449.25 184.0V189.4M455.25 182.5V184.4M455.25 188.2V191.9M461.25 176.9V179.0M461.25 189.4V190.6M467.25 177.5V179.4M479.25 191.9V196.9M485.25 199.1V207.6M491.25 194.0V196.3M491.25 200.0V202.6M497.25 191.9V196.3M497.25 198.6V200.7M509.25 189.8V199.8M509.25 203.8V205.7M515.25 196.9V203.8M527.25 196.9V198.6M533.25 194.0V199.4M539.25 189.8V193.5M539.25 201.6V202.6M545.25 197.8V203.8M551.25 201.6V204.8M557.25 192.0V192.8M557.25 196.3V197.0M563.25 191.3V192.8M563.25 195.7V196.9M569.25 193.2V194.4M569.25 199.4V202.0M575.25 197.8V202.6M581.25 194.0V198.8M581.25 206.6V216.6M587.25 204.0V206.6M587.25 212.0V214.1M599.25 202.0V204.0M599.25 207.0V208.6M605.25 203.2V208.6M611.25 203.5V205.0M617.25 205.3V211.0M629.25 198.2V202.6M635.25 197.3V203.2M641.25 198.2V199.4M641.25 202.6V204.8M653.25 200.7V207.0M659.25 203.8V207.0M665.25 198.6V204.1M671.25 200.3V206.0M677.25 200.7V203.2M683.25 197.8V198.8M683.25 202.6V206.0M689.25 192.0V193.2M689.25 199.0V200.7M695.25 191.3V195.7M701.25 179.4V181.5M707.25 181.0V183.2M713.25 178.0V179.3M713.25 188.0V190.4M719.25 163.9V166.0M719.25 178.8V181.3M725.25 148.5V158.4M725.25 167.2V168.9M731.25 155.1V158.4M731.25 161.1V163.9M737.25 143.2V148.1M743.25 128.2V132.4M749.25 116.3V121.3M749.25 131.2V137.9M755.25 118.6V120.0M761.25 133.2V149.5M767.25 144.8V149.8M773.25 128.2V139.0M773.25 144.5V146.5M779.25 134.9V136.5M779.25 156.4V161.1M785.25 149.0V157.3M785.25 163.9V187.1M791.25 147.8V150.1M791.25 168.4V170.0M797.25 144.0V153.4M797.25 156.8V163.9M803.25 153.4V157.3M803.25 159.4V163.1M809.25 152.3V162.7M815.25 145.7V153.9M815.25 157.8V159.8M821.25 149.0V154.8M821.25 161.7V163.4M827.25 151.7V161.7M827.25 165.6V166.9M833.25 151.2V152.3M833.25 164.4V166.9M839.25 147.8V157.8M845.25 145.7V147.8M845.25 151.2V154.5M851.25 135.7V143.4M851.25 148.7V150.7M863.25 106.4V124.1M863.25 128.4V128.8M869.25 118.0V128.8M875.25 120.2V123.5M875.25 128.4V133.8M881.25 115.6V117.2M881.25 127.9V131.8M887.25 108.9V115.8M887.25 117.2V122.5M893.25 91.6V94.4M893.25 118.8V121.6M899.25 84.5V87.3M899.25 91.0V100.8M905.25 85.3V87.2M905.25 96.2V103.5M911.25 83.6V88.2M911.25 95.8V107.0M917.25 98.5V101.6M923.25 81.1V95.2M923.25 99.8V104.8M929.25 81.6V90.2M929.25 99.8V101.5M935.25 80.3V87.7M935.25 90.8V92.2M941.25 92.7V102.5M947.25 89.4V93.2M953.25 101.5V107.2M953.25 110.5V118.4M959.25 104.3V106.5M959.25 116.8V119.3M971.25 129.2V133.0M971.25 135.8V138.7M977.25 123.4V134.7M977.25 143.0V145.8M983.25 138.3V151.3M989.25 138.7V143.6M989.25 151.3V152.4M995.25 149.6V151.9M995.25 154.9V162.0M1001.25 150.0V157.4" stroke="#00ee00" stroke-width="1.05" fill="none"/><path d="M279.35 212.6H283.15M303.35 213.6H307.15M321.35 209.2H325.15M339.35 207.3H343.15M351.35 209.8H355.15M357.35 209.1H361.15M363.35 209.5H367.15M369.35 209.2H373.15M411.35 197.8H415.15M435.35 183.5H439.15M477.35 193.8H481.15M513.35 199.8H517.15M543.35 200.7H547.15M573.35 198.8H577.15M603.35 204.8H607.15M615.35 207.6H619.15M627.35 200.3H631.15M633.35 199.0H637.15M651.35 203.8H655.15M663.35 202.6H667.15M669.35 202.3H673.15M675.35 202.3H679.15M693.35 193.5H697.15M759.35 136.2H763.15M807.35 158.9H811.15M837.35 151.2H841.15M867.35 124.3H871.15M981.35 143.6H985.15M999.35 153.6H1003.15" stroke="#00f400" stroke-width="1" fill="none"/><path d="M261.75 214.7H264.75V217.6H261.75ZM267.75 210.6H270.75V214.5H267.75ZM291.75 211.8H294.75V214.2H291.75ZM309.75 210.6H312.75V213.2H309.75ZM333.75 205.7H336.75V207.3H333.75ZM375.75 207.4H378.75V209.7H375.75ZM381.75 201.5H384.75V206.2H381.75ZM393.75 198.6H396.75V205.3H393.75ZM399.75 195.4H402.75V198.6H399.75ZM417.75 193.6H420.75V197.8H417.75ZM423.75 188.6H426.75V194.9H423.75ZM429.75 184.2H432.75V188.4H429.75ZM441.75 181.0H444.75V183.6H441.75ZM459.75 179.4H462.75V189.0H459.75ZM489.75 196.7H492.75V199.6H489.75ZM507.75 200.2H510.75V203.4H507.75ZM519.75 196.7H522.75V202.8H519.75ZM525.75 191.4H528.75V196.5H525.75ZM549.75 195.4H552.75V201.2H549.75ZM555.75 193.2H558.75V195.9H555.75ZM591.75 208.0H594.75V212.2H591.75ZM597.75 204.4H600.75V206.6H597.75ZM621.75 200.7H624.75V207.2H621.75ZM657.75 201.7H660.75V203.4H657.75ZM681.75 199.2H684.75V202.2H681.75ZM687.75 193.6H690.75V198.6H687.75ZM699.75 181.9H702.75V194.4H699.75ZM711.75 179.7H714.75V187.6H711.75ZM717.75 166.4H720.75V178.4H717.75ZM723.75 158.8H726.75V166.8H723.75ZM735.75 148.5H738.75V158.5H735.75ZM741.75 132.8H744.75V148.1H741.75ZM747.75 121.7H750.75V130.8H747.75ZM771.75 139.4H774.75V144.1H771.75ZM789.75 150.5H792.75V168.0H789.75ZM813.75 154.3H816.75V157.4H813.75ZM831.75 152.7H834.75V164.0H831.75ZM843.75 148.2H846.75V150.8H843.75ZM849.75 143.8H852.75V148.3H849.75ZM855.75 127.8H858.75V141.3H855.75ZM861.75 124.5H864.75V128.0H861.75ZM879.75 117.6H882.75V127.5H879.75ZM891.75 94.8H894.75V118.4H891.75ZM897.75 87.7H900.75V90.6H897.75ZM909.75 88.6H912.75V95.4H909.75ZM921.75 95.6H924.75V99.4H921.75ZM927.75 90.6H930.75V99.4H927.75ZM933.75 88.1H936.75V90.4H933.75ZM951.75 107.6H954.75V110.1H951.75Z" stroke="#00f400" stroke-width="1" fill="#000"/><path d="M255.75 215.0H258.75V217.1H255.75ZM273.75 210.8H276.75V212.7H273.75ZM285.75 212.7H288.75V213.5H285.75ZM297.75 212.0H300.75V213.2H297.75ZM315.75 209.6H318.75V210.3H315.75ZM327.75 207.7H330.75V208.3H327.75ZM345.75 207.7H348.75V210.0H345.75ZM387.75 201.5H390.75V204.0H387.75ZM405.75 196.1H408.75V198.4H405.75ZM447.75 181.4H450.75V183.6H447.75ZM453.75 184.8H456.75V187.8H453.75ZM465.75 179.8H468.75V187.8H465.75ZM471.75 187.9H474.75V193.4H471.75ZM483.75 195.2H486.75V198.7H483.75ZM495.75 196.7H498.75V198.2H495.75ZM501.75 199.4H504.75V204.9H501.75ZM531.75 191.7H534.75V193.6H531.75ZM537.75 193.9H540.75V201.2H537.75ZM561.75 193.2H564.75V195.3H561.75ZM567.75 194.8H570.75V199.0H567.75ZM579.75 199.2H582.75V206.2H579.75ZM585.75 207.0H588.75V211.6H585.75ZM609.75 205.4H612.75V207.8H609.75ZM639.75 199.8H642.75V202.2H639.75ZM645.75 202.4H648.75V204.0H645.75ZM705.75 183.6H708.75V187.1H705.75ZM729.75 158.8H732.75V160.7H729.75ZM753.75 120.4H756.75V136.1H753.75ZM765.75 134.9H768.75V144.4H765.75ZM777.75 136.9H780.75V156.0H777.75ZM783.75 157.7H786.75V163.5H783.75ZM795.75 153.8H798.75V156.4H795.75ZM801.75 157.7H804.75V159.0H801.75ZM819.75 155.2H822.75V161.3H819.75ZM825.75 162.1H828.75V165.2H825.75ZM873.75 123.9H876.75V128.0H873.75ZM885.75 116.2H888.75V116.8H885.75ZM903.75 87.6H906.75V95.8H903.75ZM915.75 87.6H918.75V98.1H915.75ZM939.75 87.0H942.75V92.3H939.75ZM945.75 93.6H948.75V108.7H945.75ZM957.75 106.9H960.75V116.4H957.75ZM963.75 116.8H966.75V134.6H963.75ZM969.75 133.4H972.75V135.4H969.75ZM975.75 135.1H978.75V142.6H975.75ZM987.75 144.0H990.75V150.9H987.75ZM993.75 152.3H996.75V154.5H993.75Z" stroke="#00f400" stroke-width="1" fill="#fff"/></g><path d="M257.4 238.4V71.4H1022M257.4 238.4H1022" stroke="#e8e8e8" stroke-width=".8" fill="none"/><path d="M257.4 238.4v3M305.4 238.4v3M353.4 238.4v3M401.4 238.4v3M449.4 238.4v3M497.4 238.4v3M545.4 238.4v3M593.4 238.4v3M641.4 238.4v3M689.4 238.4v3M737.4 238.4v3M785.4 238.4v3M833.4 238.4v3M881.4 238.4v3M929.4 238.4v3M977.4 238.4v3" stroke="#e8e8e8" stroke-width=".8" fill="none"/></svg>
<svg style="left:0;top:0" width="1024" height="543" viewBox="0 0 1024 543"><clipPath id="cb"><rect x="254" y="262" width="769" height="212.8"/></clipPath><g clip-path="url(#cb)"><rect x="254" y="262" width="769" height="213" fill="#000"/><path d="M279.65 262V475M303.65 262V475M327.65 262V475M351.65 262V475M375.65 262V475M399.65 262V475M423.65 262V475M447.65 262V475M471.65 262V475M495.65 262V475M519.65 262V475M543.65 262V475M567.65 262V475M591.65 262V475M615.65 262V475M639.65 262V475M663.65 262V475M687.65 262V475M711.65 262V475M735.65 262V475M759.65 262V475M783.65 262V475M807.65 262V475M831.65 262V475M855.65 262V475M879.65 262V475M903.65 262V475M927.65 262V475M951.65 262V475M975.65 262V475M999.65 262V475" stroke="#778899" stroke-width=".9" stroke-dasharray="2.4 2.1" fill="none"/><path d="M256.5 281.40H1023M256.5 305.40H1023M256.5 329.40H1023M256.5 353.40H1023M256.5 377.40H1023M256.5 401.40H1023M256.5 425.40H1023M256.5 449.40H1023M256.5 473.40H1023" stroke="#778899" stroke-width=".9" stroke-dasharray="2.4 2.1" fill="none"/><path d="M256.5 408.3H1023" stroke="#00a000" stroke-width=".8"/><path d="M274.00 443.4V448.4M280.00 426.8V436.1M280.00 447.7V454.3M286.00 429.5V434.4M286.00 448.9V453.8M292.00 408.6V425.2M292.00 449.4V454.3M298.00 411.9V421.8M298.00 426.2V433.9M304.00 425.7V426.8M304.00 455.5V467.9M310.00 436.4V445.0M310.00 458.0V460.5M316.00 437.3V442.7M316.00 449.4V449.7M322.00 442.2V443.4M328.00 451.4V456.0M328.00 464.6V466.6M334.00 433.4V441.7M334.00 457.2V458.0M340.00 435.1V442.2M340.00 444.7V452.2M346.00 425.2V441.4M352.00 451.0V453.8M358.00 448.0V452.2M358.00 454.7V463.0M364.00 422.3V426.8M370.00 422.8V426.0M370.00 427.3V436.8M376.00 424.0V425.2M376.00 440.0V444.7M382.00 418.2V420.7M382.00 440.2V444.1M388.00 440.2V442.2M400.00 398.3V401.2M400.00 419.7V424.6M406.00 333.6V338.7M406.00 400.6V403.7M412.00 291.3V314.1M412.00 336.2V352.8M418.00 271.8V304.0M418.00 328.4V335.2M424.00 312.8V318.0M424.00 329.3V374.5M430.00 338.7V351.8M436.00 300.0V315.3M436.00 338.7V340.0M442.00 299.0V305.0M442.00 319.2V341.0M448.00 287.4V294.2M448.00 308.3V316.7M454.00 291.9V298.1M454.00 330.3V340.0M460.00 330.0V331.3M460.00 342.6V358.6M466.00 314.7V319.6M466.00 348.5V350.4M472.00 305.9V308.3M472.00 321.9V334.2M478.00 284.0V305.9M478.00 309.8V322.5M484.00 295.2V306.9M484.00 323.5V334.2M490.00 319.6V325.3M490.00 343.8V345.0M496.00 344.0V345.0M496.00 367.2V373.2M502.00 336.8V346.6M502.00 368.0V369.0M508.00 324.7V348.5M508.00 354.0V357.3M514.00 327.0V329.0M514.00 354.4V356.3M520.00 304.0V315.8M520.00 332.0V337.8M526.00 309.5V315.4M526.00 319.7V337.8M532.00 309.1V322.2M532.00 327.7V329.6M538.00 314.4V327.0M538.00 353.4V356.0M544.00 350.0V355.4M544.00 369.0V385.0M550.00 410.3V412.3M556.00 387.3V394.1M556.00 411.1V424.4M562.00 375.0V395.1M562.00 419.1V422.4M568.00 374.0V376.4M568.00 419.5V420.5M574.00 356.3V373.6M574.00 387.0V389.4M580.00 375.3V389.2M580.00 391.4V405.9M586.00 372.0V375.8M586.00 388.7V401.4M592.00 377.0V387.3M592.00 397.5V401.0M598.00 368.1V412.7M604.00 384.8V394.1M604.00 400.6V408.8M610.00 377.5V394.1M610.00 416.2V417.6M616.00 396.1V403.3M616.00 416.6V427.3M622.00 404.3V405.3M622.00 408.4V411.1" stroke="#00ee00" stroke-width="1.05" fill="none"/><path d="M596.10 400.6H599.90" stroke="#00f400" stroke-width="1" fill="none"/><path d="M266.50 466.7H269.50V479.6H266.50ZM272.50 448.8H275.50V465.6H272.50ZM278.50 436.5H281.50V447.3H278.50ZM290.50 425.6H293.50V449.0H290.50ZM308.50 445.4H311.50V457.6H308.50ZM314.50 443.1H317.50V449.0H314.50ZM326.50 456.4H329.50V464.2H326.50ZM332.50 442.1H335.50V456.8H332.50ZM338.50 442.6H341.50V444.3H338.50ZM362.50 427.2H365.50V453.9H362.50ZM380.50 421.1H383.50V439.8H380.50ZM392.50 418.2H395.50V441.8H392.50ZM398.50 401.6H401.50V419.3H398.50ZM404.50 339.1H407.50V400.2H404.50ZM410.50 314.5H413.50V335.8H410.50ZM422.50 318.4H425.50V328.9H422.50ZM434.50 315.7H437.50V338.3H434.50ZM440.50 305.4H443.50V318.8H440.50ZM446.50 294.6H449.50V307.9H446.50ZM464.50 320.0H467.50V348.1H464.50ZM470.50 308.7H473.50V321.5H470.50ZM476.50 306.3H479.50V309.4H476.50ZM500.50 347.0H503.50V367.6H500.50ZM512.50 329.4H515.50V354.0H512.50ZM518.50 316.2H521.50V331.6H518.50ZM554.50 394.5H557.50V410.7H554.50ZM566.50 376.8H569.50V419.1H566.50ZM584.50 376.2H587.50V388.3H584.50ZM602.50 394.5H605.50V400.2H602.50ZM614.50 403.7H617.50V416.2H614.50Z" stroke="#00f400" stroke-width="1" fill="#000"/><path d="M284.50 434.8H287.50V448.5H284.50ZM296.50 422.2H299.50V425.8H296.50ZM302.50 427.2H305.50V455.1H302.50ZM320.50 443.8H323.50V465.1H320.50ZM344.50 441.8H347.50V443.5H344.50ZM350.50 443.1H353.50V450.6H350.50ZM356.50 452.6H359.50V454.3H356.50ZM368.50 426.4H371.50V426.9H368.50ZM374.50 425.6H377.50V439.6H374.50ZM386.50 419.7H389.50V439.8H386.50ZM416.50 304.4H419.50V328.0H416.50ZM428.50 318.0H431.50V338.3H428.50ZM452.50 298.5H455.50V329.9H452.50ZM458.50 331.7H461.50V342.2H458.50ZM482.50 307.3H485.50V323.1H482.50ZM488.50 325.7H491.50V343.4H488.50ZM494.50 345.4H497.50V366.8H494.50ZM506.50 348.9H509.50V353.6H506.50ZM524.50 315.8H527.50V319.3H524.50ZM530.50 322.6H533.50V327.3H530.50ZM536.50 327.4H539.50V353.0H536.50ZM542.50 355.8H545.50V368.6H542.50ZM548.50 364.9H551.50V409.9H548.50ZM560.50 395.5H563.50V418.7H560.50ZM572.50 374.0H575.50V386.6H572.50ZM578.50 389.6H581.50V391.0H578.50ZM590.50 387.7H593.50V397.1H590.50ZM608.50 394.5H611.50V415.8H608.50ZM620.50 405.7H623.50V408.0H620.50Z" stroke="#00f400" stroke-width="1" fill="#fff"/></g><path d="M256.5 474.6V263.5H1022.5V474.6" stroke="#b4b4b4" stroke-width=".9" fill="none"/><rect x="254" y="474.8" width="770" height="1" fill="#9a9a9a"/></svg>
<span class="t" style="top:242.00px;font-size:7.8px;line-height:7.8px;color:#dedede;left:257.40px;transform-origin:0 50%;transform:scaleX(0.8823);">1 Nov 2012</span>
<span class="t" style="top:242.00px;font-size:7.8px;line-height:7.8px;color:#dedede;left:305.40px;transform-origin:0 50%;transform:scaleX(0.8473);">1 Jul 2013</span>
<span class="t" style="top:242.00px;font-size:7.8px;line-height:7.8px;color:#dedede;left:353.40px;transform-origin:0 50%;transform:scaleX(0.8617);">1 Mar 2014</span>
<span class="t" style="top:242.00px;font-size:7.8px;line-height:7.8px;color:#dedede;left:401.40px;transform-origin:0 50%;transform:scaleX(0.8823);">1 Nov 2014</span>
<span class="t" style="top:242.00px;font-size:7.8px;line-height:7.8px;color:#dedede;left:449.40px;transform-origin:0 50%;transform:scaleX(0.8473);">1 Jul 2015</span>
<span class="t" style="top:242.00px;font-size:7.8px;line-height:7.8px;color:#dedede;left:497.40px;transform-origin:0 50%;transform:scaleX(0.8617);">1 Mar 2016</span>
<span class="t" style="top:242.00px;font-size:7.8px;line-height:7.8px;color:#dedede;left:545.40px;transform-origin:0 50%;transform:scaleX(0.8823);">1 Nov 2016</span>
<span class="t" style="top:242.00px;font-size:7.8px;line-height:7.8px;color:#dedede;left:593.40px;transform-origin:0 50%;transform:scaleX(0.8473);">1 Jul 2017</span>
<span class="t" style="top:242.00px;font-size:7.8px;line-height:7.8px;color:#dedede;left:641.40px;transform-origin:0 50%;transform:scaleX(0.8617);">1 Mar 2018</span>
<span class="t" style="top:242.00px;font-size:7.8px;line-height:7.8px;color:#dedede;left:689.40px;transform-origin:0 50%;transform:scaleX(0.8823);">1 Nov 2018</span>
<span class="t" style="top:242.00px;font-size:7.8px;line-height:7.8px;color:#dedede;left:737.40px;transform-origin:0 50%;transform:scaleX(0.8473);">1 Jul 2019</span>
<span class="t" style="top:242.00px;font-size:7.8px;line-height:7.8px;color:#dedede;left:785.40px;transform-origin:0 50%;transform:scaleX(0.8617);">1 Mar 2020</span>
<span class="t" style="top:242.00px;font-size:7.8px;line-height:7.8px;color:#dedede;left:833.40px;transform-origin:0 50%;transform:scaleX(0.8823);">1 Nov 2020</span>
<span class="t" style="top:242.00px;font-size:7.8px;line-height:7.8px;color:#dedede;left:881.40px;transform-origin:0 50%;transform:scaleX(0.8473);">1 Jul 2021</span>
<span class="t" style="top:242.00px;font-size:7.8px;line-height:7.8px;color:#dedede;left:929.40px;transform-origin:0 50%;transform:scaleX(0.8617);">1 Mar 2022</span>
<span class="t" style="top:242.00px;font-size:7.8px;line-height:7.8px;color:#dedede;left:977.40px;transform-origin:0 50%;transform:scaleX(0.8823);">1 Nov 2022</span>
<svg style="left:261px;top:76px" width="11" height="8" viewBox="0 0 11 8" ><rect x="0" y="0" width="5.4" height="8" fill="#f06a6a"/><rect x="5.4" y="0" width="5.4" height="8" fill="#3f86c8"/><path d="M0 2.6H10.8M0 5.2H10.8M2.7 2.6V8M8.1 2.6V8" stroke="#fff" stroke-width=".5" opacity=".7"/></svg>
<svg style="left:277px;top:76px" width="11" height="8" viewBox="0 0 11 8" ><rect x="0" y="0" width="4" height="8" fill="#ee5a52"/><rect x="6" y="2.4" width="4.8" height="5.6" fill="#3f86c8"/><rect x="3.6" y="0" width="4" height="1.8" fill="#e6e6e6"/><path d="M2 4.5V8M8.4 4V8" stroke="#fff" stroke-width=".8" opacity=".8"/></svg>
<span class="t" style="top:76.00px;font-size:7.8px;line-height:7.8px;color:#dedede;left:292.00px;transform-origin:0 50%;transform:scaleX(0.8978);">JBSS3, Monthly:  JBS</span>
<span class="t" style="top:76.00px;font-size:7.8px;line-height:7.8px;color:#dedede;left:381.50px;transform-origin:0 50%;transform:scaleX(0.9658);">ON</span>
<span class="t" style="top:76.00px;font-size:7.8px;line-height:7.8px;color:#dedede;left:405.80px;transform-origin:0 50%;transform:scaleX(0.9315);">NM</span>
<svg style="left:260px;top:268px" width="11" height="8" viewBox="0 0 11 8" ><rect x="0" y="0" width="5.4" height="8" fill="#f06a6a"/><rect x="5.4" y="0" width="5.4" height="8" fill="#3f86c8"/><path d="M0 2.6H10.8M0 5.2H10.8M2.7 2.6V8M8.1 2.6V8" stroke="#fff" stroke-width=".5" opacity=".7"/></svg>
<span class="t" style="top:268.20px;font-size:7.8px;line-height:7.8px;color:#dedede;left:275.00px;transform-origin:0 50%;transform:scaleX(0.9361);">DOL$D, Monthly:</span>
<span class="t" style="top:268.20px;font-size:7.8px;line-height:7.8px;color:#dedede;left:335.50px;transform-origin:0 50%;transform:scaleX(0.9189);">DOLAR COMERCIAL</span>
<span class="t" style="top:268.20px;font-size:7.8px;line-height:7.8px;color:#dedede;left:406.90px;transform-origin:0 50%;transform:scaleX(0.8867);">- Por Liquidez (DOLJ23) - Ajuste por Diferença</span>
<div style="left:250px;top:476px;width:774px;height:15px;background:#f0f0f0;"></div>
<div style="left:250px;top:477px;width:83px;height:13px;background:#f0f0f0;border:1px solid #c9c9c9;border-top:none;box-sizing:border-box"></div>
<span class="t" style="top:479.16px;font-size:9.5px;line-height:9.5px;color:#8a8a8a;left:258.80px;transform-origin:0 50%;transform:scaleX(0.9322);">DOL$D,Monthly</span>
<div style="left:332px;top:476px;width:75px;height:14px;background:#ffffff;border:1px solid #3c3c3c;border-top:none;border-left-color:#9a9a9a;box-sizing:border-box;box-shadow:1px 1px 0 #9a9a9a"></div>
<span class="t" style="top:479.16px;font-size:9.5px;line-height:9.5px;color:#222;left:340.00px;transform-origin:0 50%;transform:scaleX(0.8930);">JBSS3,Monthly</span>
<svg style="left:994px;top:483px" width="4" height="5" viewBox="0 0 4 5" ><path d="M3.5 0.3L0.8 2.5L3.5 4.7Z" fill="#b9b9b9"/></svg>
<svg style="left:1011px;top:483px" width="4" height="5" viewBox="0 0 4 5" ><path d="M0.5 0.3L3.2 2.5L0.5 4.7Z" fill="#b9b9b9"/></svg>
<div style="left:11px;top:494px;width:1010px;height:1px;background:#bcbcbc;"></div>
<div style="left:11px;top:495px;width:1010px;height:11px;background:#ffffff;"></div>
<div style="left:11px;top:494px;width:1px;height:12px;background:#bcbcbc;"></div>
<div style="left:11px;top:494px;width:1010px;height:12px;overflow:hidden;background:transparent">
<span class="t" style="top:4.16px;font-size:9.5px;line-height:9.5px;color:#222;left:6.00px;transform-origin:0 50%;transform:scaleX(0.9031);">Assunto</span>
<div style="left:505px;top:0px;width:1px;height:12px;background:#dcdcdc;"></div>
<span class="t" style="top:4.16px;font-size:9.5px;line-height:9.5px;color:#222;left:510.30px;transform-origin:0 50%;transform:scaleX(0.8234);">De</span>
<div style="left:707px;top:0px;width:1px;height:12px;background:#dcdcdc;"></div>
<span class="t" style="top:4.16px;font-size:9.5px;line-height:9.5px;color:#222;left:711.50px;transform-origin:0 50%;transform:scaleX(0.8471);">Para</span>
<div style="left:897px;top:0px;width:1px;height:12px;background:#dcdcdc;"></div>
<span class="t" style="top:4.16px;font-size:9.5px;line-height:9.5px;color:#222;left:975.80px;transform-origin:0 50%;transform:scaleX(0.9177);">Horár</span>
<div style="left:998px;top:0px;width:12px;height:12px;background:#e4e4e4;"></div>
</div>
<svg style="left:3px;top:496px" width="5" height="5" viewBox="0 0 5 5" ><path d="M0.5 0.5L4.5 4.5M4.5 0.5L0.5 4.5" stroke="#111" stroke-width="1.2"/></svg>
<div style="left:3px;top:504px;width:7px;height:19px;background:#cfdfef;"></div>
<span class="t" style="left:-3.5px;top:509px;font-size:9px;line-height:9px;color:#222;transform:rotate(-90deg) scaleX(.82);transform-origin:50% 50%;width:20px;text-align:center">Caix.</span>
<div style="left:11px;top:506px;width:219px;height:1px;background:#3c3c3c;"></div>
<div style="left:310px;top:506px;width:712px;height:1px;background:#3c3c3c;"></div>
<div style="left:11px;top:507px;width:219px;height:1px;background:#9a9a9a;opacity:.45"></div>
<div style="left:311px;top:507px;width:711px;height:1px;background:#9a9a9a;opacity:.45"></div>
<div style="left:229px;top:506px;width:82px;height:15px;background:#ffffff;border:1px solid #3c3c3c;border-top:none;box-sizing:border-box;border-radius:0 0 2px 2px;box-shadow:1px 1px 0 #9a9a9a"></div>
<span class="t" style="top:508.56px;font-size:9.5px;line-height:9.5px;color:#8a8a8a;left:21.30px;transform-origin:0 50%;transform:scaleX(0.9308);">Negociação</span>
<span class="t" style="top:508.56px;font-size:9.5px;line-height:9.5px;color:#8a8a8a;left:83.30px;transform-origin:0 50%;transform:scaleX(0.9057);">Exposição</span>
<span class="t" style="top:508.56px;font-size:9.5px;line-height:9.5px;color:#8a8a8a;left:138.30px;transform-origin:0 50%;transform:scaleX(0.9607);">Histórico</span>
<span class="t" style="top:508.56px;font-size:9.5px;line-height:9.5px;color:#8a8a8a;left:189.30px;transform-origin:0 50%;transform:scaleX(0.9325);">Notícias</span>
<span class="t" style="top:508.56px;font-size:9.5px;line-height:9.5px;color:#8a8a8a;left:318.00px;transform-origin:0 50%;transform:scaleX(0.9141);">Calendário</span>
<span class="t" style="top:508.56px;font-size:9.5px;line-height:9.5px;color:#8a8a8a;left:375.50px;transform-origin:0 50%;transform:scaleX(0.8891);">Empresa</span>
<span class="t" style="top:508.56px;font-size:9.5px;line-height:9.5px;color:#8a8a8a;left:424.50px;transform-origin:0 50%;transform:scaleX(0.9064);">Alertas</span>
<span class="t" style="top:508.56px;font-size:9.5px;line-height:9.5px;color:#8a8a8a;left:466.30px;transform-origin:0 50%;transform:scaleX(0.9537);">Artigos</span>
<span class="t" style="top:508.56px;font-size:9.5px;line-height:9.5px;color:#8a8a8a;left:509.50px;transform-origin:0 50%;transform:scaleX(0.9419);">Biblioteca</span>
<span class="t" style="top:508.56px;font-size:9.5px;line-height:9.5px;color:#8a8a8a;left:563.80px;transform-origin:0 50%;transform:scaleX(0.8756);">Experts</span>
<span class="t" style="top:508.56px;font-size:9.5px;line-height:9.5px;color:#8a8a8a;left:607.50px;transform-origin:0 50%;transform:scaleX(0.9269);">Diário</span>
<div style="left:75.5px;top:509px;width:1px;height:11px;background:#7d7d7d;"></div>
<div style="left:130.3px;top:509px;width:1px;height:11px;background:#7d7d7d;"></div>
<div style="left:181.5px;top:509px;width:1px;height:11px;background:#7d7d7d;"></div>
<div style="left:368px;top:509px;width:1px;height:11px;background:#7d7d7d;"></div>
<div style="left:416.8px;top:509px;width:1px;height:11px;background:#7d7d7d;"></div>
<div style="left:459px;top:509px;width:1px;height:11px;background:#7d7d7d;"></div>
<div style="left:502.3px;top:509px;width:1px;height:11px;background:#7d7d7d;"></div>
<div style="left:556px;top:509px;width:1px;height:11px;background:#7d7d7d;"></div>
<div style="left:600px;top:509px;width:1px;height:11px;background:#7d7d7d;"></div>
<span class="t" style="top:508.56px;font-size:9.5px;line-height:9.5px;color:#222;left:236.80px;transform-origin:0 50%;transform:scaleX(0.9052);">Caixa de E-mail</span>
<span class="t" style="top:514.32px;font-size:6px;line-height:6px;color:#e03030;font-weight:bold;left:299.60px;transform-origin:0 50%;transform:scaleX(0.8990);">8</span>
<svg style="left:824px;top:511px" width="9" height="10" viewBox="0 0 9 10" ><path d="M2.6 3.4V2.4A1.9 1.9 0 0 1 6.4 2.4V3.4" fill="none" stroke="#d9a520" stroke-width=".9"/><path d="M0.8 3.2H8.2L8.6 9.6H0.4Z" fill="#f1c21b"/></svg>
<span class="t" style="top:511.16px;font-size:9.5px;line-height:9.5px;color:#222;left:837.30px;transform-origin:0 50%;transform:scaleX(0.9199);">Mercado</span>
<svg style="left:881px;top:512px" width="12" height="8" viewBox="0 0 12 8" ><circle cx="6" cy="4" r="1" fill="#2f7dbb"/><path d="M3.9 2A3 3 0 0 0 3.9 6M8.1 2A3 3 0 0 1 8.1 6M2 0.8A5 5 0 0 0 2 7.2M10 0.8A5 5 0 0 1 10 7.2" fill="none" stroke="#2f7dbb" stroke-width=".8"/></svg>
<span class="t" style="top:511.16px;font-size:9.5px;line-height:9.5px;color:#222;left:896.00px;transform-origin:0 50%;transform:scaleX(0.8502);">Sinais</span>
<svg style="left:928px;top:510px" width="13" height="11" viewBox="0 0 13 11" ><path d="M3 6.8A2.4 2.4 0 0 1 3.2 2.2A3.4 3.4 0 0 1 9.6 2.4A2.3 2.3 0 0 1 9.8 6.8Z" fill="#e6f0fa" stroke="#2f7dbb" stroke-width="1"/><path d="M6.4 6.8V9.6M3.6 10H9.4" stroke="#2f7dbb" stroke-width="1"/></svg>
<span class="t" style="top:511.16px;font-size:9.5px;line-height:9.5px;color:#222;left:942.30px;transform-origin:0 50%;transform:scaleX(0.7890);">VPS</span>
<svg style="left:967px;top:510px" width="11" height="11" viewBox="0 0 11 11" ><path d="M5.5 0.8L7 1.9L8.8 1.7L9.3 3.5L10.6 4.7L9.7 6.3L9.9 8.1L8.2 8.6L7 10.1L5.5 9.3L4 10.1L2.8 8.6L1.1 8.1L1.3 6.3L0.4 4.7L1.7 3.5L2.2 1.7L4 1.9Z" fill="none" stroke="#2fb24a" stroke-width="1"/><path d="M3.6 5.4L5 6.8L7.4 4" fill="none" stroke="#2fb24a" stroke-width="1"/></svg>
<span class="t" style="top:511.16px;font-size:9.5px;line-height:9.5px;color:#222;left:981.80px;transform-origin:0 50%;transform:scaleX(0.8919);">Testador</span>
<div style="left:2px;top:524px;width:1022px;height:1px;background:#d6d6d6;"></div>
<div style="left:2px;top:525px;width:1022px;height:1px;background:#fdfdfd;"></div>
<span class="t" style="top:530.36px;font-size:9.5px;line-height:9.5px;color:#222;left:2.00px;transform-origin:0 50%;transform:scaleX(0.8905);">Para Ajuda, pressione F1</span>
<div style="left:537px;top:528px;width:1px;height:13px;background:#a9a9a9;"></div>
<div style="left:538px;top:528px;width:1px;height:13px;background:#fdfdfd;"></div>
<div style="left:612px;top:528px;width:1px;height:13px;background:#a9a9a9;"></div>
<div style="left:613px;top:528px;width:1px;height:13px;background:#fdfdfd;"></div>
<div style="left:685px;top:528px;width:1px;height:13px;background:#a9a9a9;"></div>
<div style="left:686px;top:528px;width:1px;height:13px;background:#fdfdfd;"></div>
<div style="left:738px;top:528px;width:1px;height:13px;background:#a9a9a9;"></div>
<div style="left:739px;top:528px;width:1px;height:13px;background:#fdfdfd;"></div>
<div style="left:792px;top:528px;width:1px;height:13px;background:#a9a9a9;"></div>
<div style="left:793px;top:528px;width:1px;height:13px;background:#fdfdfd;"></div>
<div style="left:842px;top:528px;width:1px;height:13px;background:#a9a9a9;"></div>
<div style="left:843px;top:528px;width:1px;height:13px;background:#fdfdfd;"></div>
<div style="left:895px;top:528px;width:1px;height:13px;background:#a9a9a9;"></div>
<div style="left:896px;top:528px;width:1px;height:13px;background:#fdfdfd;"></div>
<div style="left:945px;top:528px;width:1px;height:13px;background:#a9a9a9;"></div>
<div style="left:946px;top:528px;width:1px;height:13px;background:#fdfdfd;"></div>
<span class="t" style="top:530.36px;font-size:9.5px;line-height:9.5px;color:#222;left:542.50px;transform-origin:0 50%;transform:scaleX(0.9136);">Default</span>
<svg style="left:949px;top:531px" width="11" height="9" viewBox="0 0 11 9" ><path d="M1 9V7.6M3.2 9V6.2M5.4 9V4.6M7.6 9V2.8M9.8 9V0.8" stroke="#35b44a" stroke-width="1.3"/></svg>
<span class="t" style="top:530.36px;font-size:9.5px;line-height:9.5px;color:#222;left:965.00px;transform-origin:0 50%;transform:scaleX(0.8658);">141 / 6 Kb</span>
</div></body></html>
